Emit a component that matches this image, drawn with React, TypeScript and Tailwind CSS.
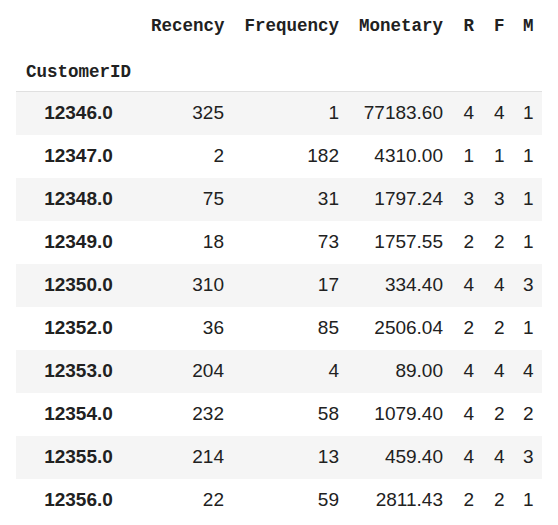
const cols = 'grid grid-cols-[125px_93px_115px_104px_31px_29px_29px] items-center'

const rows: [string, number, number, string, number, number, number][] = [
  ['12346.0', 325, 1, '77183.60', 4, 4, 1],
  ['12347.0', 2, 182, '4310.00', 1, 1, 1],
  ['12348.0', 75, 31, '1797.24', 3, 3, 1],
  ['12349.0', 18, 73, '1757.55', 2, 2, 1],
  ['12350.0', 310, 17, '334.40', 4, 4, 3],
  ['12352.0', 36, 85, '2506.04', 2, 2, 1],
  ['12353.0', 204, 4, '89.00', 4, 4, 4],
  ['12354.0', 232, 58, '1079.40', 4, 2, 2],
  ['12355.0', 214, 13, '459.40', 4, 4, 3],
  ['12356.0', 22, 59, '2811.43', 2, 2, 1],
]

const headers = ['Recency', 'Frequency', 'Monetary', 'R', 'F', 'M']

export default function App() {
  return (
    <div className="w-[558px] h-[525px] bg-white text-[#212121] overflow-hidden">
      <div className="ml-4 w-[526px]">
        {/* column header row */}
        <div className={`${cols} h-[53px] font-['Liberation_Mono',monospace] font-bold text-[17.5px]`}>
          <div />
          {headers.map(h => (
            <div key={h} className="px-[10px] text-right">{h}</div>
          ))}
        </div>
        {/* index name row */}
        <div className={`${cols} h-[39px] border-b border-[#e0e0e0] font-['Liberation_Mono',monospace] font-bold text-[17.5px]`}>
          <div className="px-[10px] text-left">CustomerID</div>
        </div>
        {/* body */}
        <div className="font-['Liberation_Sans',Arial,sans-serif] text-[19px]">
          {rows.map((r, i) => (
            <div key={r[0]} className={`${cols} h-[43px] ${i % 2 === 0 ? 'bg-[#f5f5f5]' : 'bg-white'}`}>
              <div className="px-[10px] text-center font-bold">{r[0]}</div>
              {r.slice(1).map((v, j) => (
                <div key={j} className="px-[10px] text-right">{v}</div>
              ))}
            </div>
          ))}
        </div>
      </div>
    </div>
  )
}
